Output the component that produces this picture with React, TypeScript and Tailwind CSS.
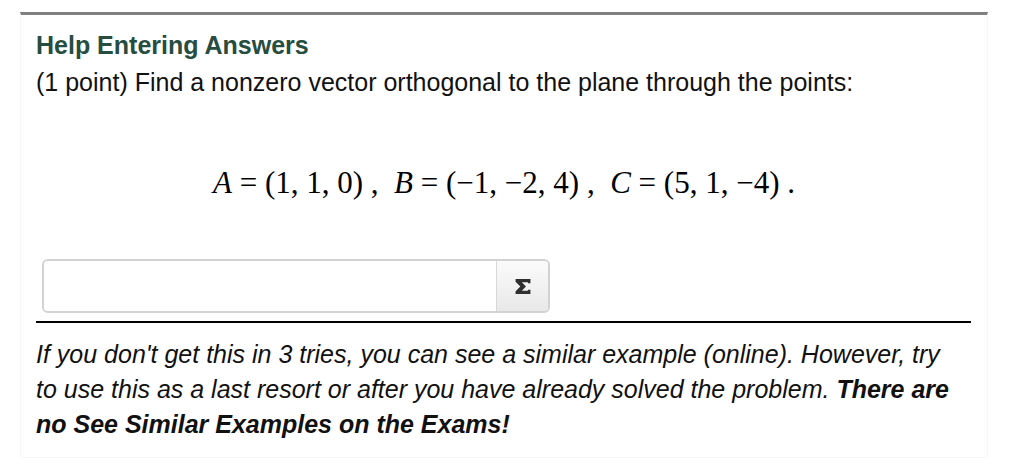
import React from 'react';

const Sigma: React.FC = () => (
  <svg width="18" height="17" viewBox="0 0 16 16" aria-hidden="true">
    <path d="M1 1H15V5H12.6V4.1H6.9L10.8 8L6.9 11.9H12.6V11H15V15H1V12.5L5.5 8L1 3.5Z" fill="#2f2f2f" />
  </svg>
);

const MathLine: React.FC = () => (
  <div className="flex justify-center text-[31px] text-black font-['Liberation_Serif',serif] leading-[31px]">
    <span>
      <i>A</i> = (1, 1, 0) ,&nbsp; <i>B</i> = (−1, −2, 4) ,&nbsp; <i>C</i> = (5, 1, −4) .
    </span>
  </div>
);

const App: React.FC = () => {
  return (
    <div className="w-[1014px] h-[474px] bg-white pt-[12px] pl-[20px] font-['Liberation_Sans',Arial,sans-serif]">
      <div className="w-[968px] h-[446px] border-t-[3px] border-t-[#808080] border-x border-x-[#f7f7f7] border-b border-b-[#f7f7f7] px-[15px]">
        <h2 className="mt-[15px] text-[25px] leading-[30px] font-bold text-[#264d3f]">
          Help Entering Answers
        </h2>
        <p className="mt-[7px] text-[25px] leading-[30px] text-[#111]">
          (1 point) Find a nonzero vector orthogonal to the plane through the points:
        </p>

        <div className="mt-[70px]">
          <MathLine />
        </div>

        <div className="mt-[61px] ml-[6px] flex w-[508px] h-[54px] rounded-[6px] border-2 border-[#d2d2d2] overflow-hidden">
          <input className="flex-1 bg-white outline-none px-2" aria-label="answer" />
          <button className="w-[52px] shrink-0 flex items-center justify-center border-l border-[#d8d8d8] bg-gradient-to-b from-[#fbfbfb] to-[#e8e8e8]">
            <Sigma />
          </button>
        </div>

        <div className="mt-[8px] h-[2px] w-[935px] bg-black" />

        <p className="mt-[14px] w-[935px] text-[25px] leading-[35px] italic text-[#111]">
          If you don't get this in 3 tries, you can see a similar example (online). However, try
          <br />
          to use this as a last resort or after you have already solved the problem. <b>There are</b>
          <br />
          <b>no See Similar Examples on the Exams!</b>
        </p>
      </div>
    </div>
  );
};

export default App;
